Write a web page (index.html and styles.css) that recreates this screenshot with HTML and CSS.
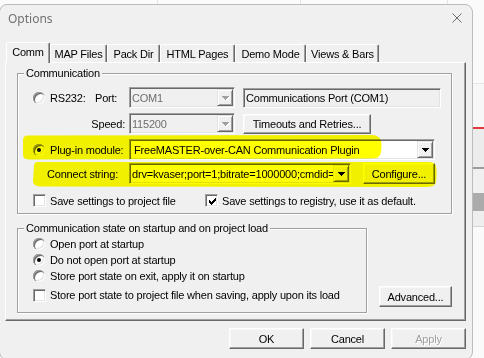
FILE: index.html
```html
<!DOCTYPE html>
<html>
<head>
<meta charset="utf-8">
<title>Options</title>
<link rel="stylesheet" href="styles.css">
</head>
<body>
<div class="desktop">
  <div class="dialog">
    <div class="titlebar">
      <span class="title">Options</span>
      <svg class="close" width="10" height="10" viewBox="0 0 10 10"><path d="M0.5 0.5L9.5 9.5M9.5 0.5L0.5 9.5" stroke="#6b6b6b" stroke-width="1" fill="none"/></svg>
    </div>
    <div class="client">
      <div class="tabs">
        <div class="tab active t-comm">Comm</div>
        <div class="tab t-map">MAP Files</div>
        <div class="tab t-pack">Pack Dir</div>
        <div class="tab t-html">HTML Pages</div>
        <div class="tab t-demo">Demo Mode</div>
        <div class="tab t-views">Views &amp; Bars</div>
      </div>
      <div class="panel">
        <fieldset class="group g1">
          <legend>Communication</legend>
          <div class="gbody">
            <div class="row">
              <div class="lead">
                <span class="radio"></span><span class="rs-label">RS232:</span><span>Port:</span>
              </div>
              <div class="combo sunken disabled w-port">
                <span class="val">COM1</span>
                <span class="drop"><svg width="7" height="4" viewBox="0 0 7 4" shape-rendering="crispEdges"><path d="M0 0h7v1h-1v1h-1v1h-1v1h-1v-1h-1v-1h-1v-1h-1z"/></svg></span>
              </div>
              <div class="field sunken w-desc">Communications Port (COM1)</div>
            </div>
            <div class="row r2">
              <div class="lead right">Speed:</div>
              <div class="combo sunken disabled w-port">
                <span class="val">115200</span>
                <span class="drop"><svg width="7" height="4" viewBox="0 0 7 4" shape-rendering="crispEdges"><path d="M0 0h7v1h-1v1h-1v1h-1v1h-1v-1h-1v-1h-1v-1h-1z"/></svg></span>
              </div>
              <div class="btn w-timeouts">Timeouts and Retries...</div>
            </div>
            <div class="row r3">
              <div class="lead">
                <span class="radio checked"></span><span class="opt-text">Plug-in module:</span>
              </div>
              <div class="combo sunken w-plugin">
                <span class="val list">FreeMASTER-over-CAN Communication Plugin</span>
                <span class="drop"><svg width="7" height="4" viewBox="0 0 7 4" shape-rendering="crispEdges"><path d="M0 0h7v1h-1v1h-1v1h-1v1h-1v-1h-1v-1h-1v-1h-1z"/></svg></span>
              </div>
            </div>
            <div class="row r4">
              <div class="lead indent">Connect string:</div>
              <div class="combo sunken w-connect">
                <span class="val">drv=kvaser;port=1;bitrate=1000000;cmdid=</span>
                <span class="drop"><svg width="7" height="4" viewBox="0 0 7 4" shape-rendering="crispEdges"><path d="M0 0h7v1h-1v1h-1v1h-1v1h-1v-1h-1v-1h-1v-1h-1z"/></svg></span>
              </div>
              <div class="btn w-configure">Configure...</div>
            </div>
            <div class="row r5">
              <div class="check-item w-save1"><span class="checkbox"></span><span class="check-text">Save settings to project file</span></div>
              <div class="check-item"><span class="checkbox"><svg width="7" height="7" viewBox="0 0 7 7" shape-rendering="crispEdges"><path d="M6 0h1v3h-1v1h-1v1h-1v1h-1v1h-1v-1h-1v-1h-1v-3h1v1h1v1h1v-1h1v-1h1z"/></svg></span><span class="check-text">Save settings to registry, use it as default.</span></div>
            </div>
          </div>
        </fieldset>
        <div class="lower">
          <fieldset class="group g2">
            <legend>Communication state on startup and on project load</legend>
            <div class="gbody">
              <div class="line"><span class="radio"></span><span class="opt-text">Open port at startup</span></div>
              <div class="line"><span class="radio checked"></span><span class="opt-text">Do not open port at startup</span></div>
              <div class="line"><span class="radio"></span><span class="opt-text">Store port state on exit, apply it on startup</span></div>
              <div class="line chk-line"><span class="checkbox"></span><span class="check-text">Store port state to project file when saving, apply upon its load</span></div>
            </div>
          </fieldset>
          <div class="btn adv">Advanced...</div>
        </div>
      </div>
      <div class="footer">
        <div class="btn foot">OK</div>
        <div class="btn foot">Cancel</div>
        <div class="btn foot disabled-btn">Apply</div>
      </div>
    </div>
  </div>
  <div class="app-edge"></div>
  <svg class="marker" width="484" height="358" viewBox="0 0 484 358">
    <path d="M23 140Q23 135.5 28 135.5L372 135Q378 135 380.5 139.5Q382.5 146 380.5 154Q379 158.5 372 158.5L30 159.5Q23 159.5 23 155Z"/>
    <path d="M37 162L428 162Q435 162 436 166Q437.5 176 435.5 183.5Q433.5 187 426 187L40 186.5Q33 186 33 181L34 166Q34.5 162 37 162Z"/>
  </svg>
</div>
</body>
</html>
```

FILE: styles.css
```css
* { box-sizing: border-box; }
html, body { margin: 0; padding: 0; }
body {
  width: 484px;
  height: 358px;
  overflow: hidden;
  font: 11px "Liberation Sans", Arial, sans-serif;
  letter-spacing: -0.2px;
  color: #000;
}
.desktop {
  position: relative;
  display: flex;
  width: 484px;
  height: 358px;
  background-color: #fbfbfb;
  background-image:
    linear-gradient(#e3e3e3, #e3e3e3),
    linear-gradient(#e3e3e3, #e3e3e3),
    linear-gradient(#e3e3e3, #e3e3e3);
  background-size: 1px 5px;
  background-repeat: no-repeat;
  background-position: 157px 0, 300px 0, 447px 0;
}
.dialog {
  position: relative;
  z-index: 1;
  flex: none;
  width: 474px;
  height: 356px;
  margin: 4px 0 0 -1px;
  background: #f0f0f0;
  border: 1px solid #bcbcbc;
  border-radius: 8px;
  display: flex;
  flex-direction: column;
  overflow: hidden;
}
.titlebar {
  height: 26px;
  display: flex;
  align-items: center;
  justify-content: space-between;
  padding: 0 10px 0 8px;
}
.title {
  font: 12px "Segoe UI", "Noto Sans", sans-serif;
  letter-spacing: 0;
  color: #727272;
}
.close { display: block; }
.client { padding: 11px 0 0 5px; }

/* tabs */
.tabs {
  display: flex;
  align-items: flex-end;
  height: 20px;
  padding-left: 1px;
}
.tab {
  height: 18px;
  display: flex;
  align-items: center;
  justify-content: center;
  white-space: nowrap;
  border: 1px solid;
  border-bottom: 0;
  border-color: #fff #696969 transparent #fff;
  border-radius: 2px 2px 0 0;
  box-shadow: inset -1px 0 0 #a0a0a0;
  background: #f0f0f0;
}
.tab.active {
  position: relative;
  z-index: 1;
  height: 21px;
  margin-bottom: -1px;
  padding-bottom: 3px;
}
.t-comm { width: 44px; }
.t-map { width: 57px; }
.t-pack { width: 53px; }
.t-html { width: 75px; }
.t-demo { width: 71px; }
.t-views { width: 73px; }

.panel {
  width: 461px;
  height: 259px;
  border: 1px solid;
  border-color: #fff #696969 #696969 #fff;
  box-shadow: inset -1px -1px 0 #a0a0a0;
  padding: 4px 0 0 11px;
}

/* group boxes */
.group {
  margin: 0;
  padding: 0;
  min-width: 0;
  border: 1px solid #a0a0a0;
  box-shadow: inset 1px 1px 0 #fff, 1px 1px 0 #fff;
}
.group legend {
  margin-left: 6px;
  padding: 0 2px;
  line-height: 13px;
  background: #f0f0f0;
  white-space: nowrap;
}
.g1 { width: 435px; }
.g1 .gbody { padding: 7px 0 6px 15px; }
.g2 { width: 350px; }
.g2 .gbody { padding: 1px 0 9px 15px; }

.row {
  display: flex;
  align-items: center;
  height: 21px;
  white-space: nowrap;
}
.r2 { margin-top: 5px; }
.r3 { margin-top: 5px; }
.r4 { margin-top: 3px; }
.r5 { margin-top: 10px; height: 13px; }

.lead {
  flex: none;
  width: 96px;
  display: flex;
  align-items: center;
}
.lead.right { justify-content: flex-end; padding-right: 4px; }
.lead.indent { padding-left: 14px; }
.rs-label { margin-left: 5px; width: 45px; }
.opt-text { margin-left: 5px; }

/* radio & checkbox */
.radio {
  position: relative;
  flex: none;
  width: 12px;
  height: 12px;
  border-radius: 50%;
  background: #fff;
  box-shadow:
    inset 1px 1px 0 #a0a0a0,
    inset 2px 2px 0 #696969,
    inset -1px -1px 0 #fff,
    inset -2px -2px 0 #e3e3e3;
}
.radio.checked::after {
  content: "";
  position: absolute;
  left: 4px;
  top: 4px;
  width: 4px;
  height: 4px;
  border-radius: 50%;
  background: #000;
}
.checkbox {
  flex: none;
  width: 13px;
  height: 13px;
  display: flex;
  align-items: center;
  justify-content: center;
  background: #fff;
  border: 1px solid;
  border-color: #a0a0a0 #fff #fff #a0a0a0;
  box-shadow: inset 1px 1px 0 #696969, inset -1px -1px 0 #e3e3e3;
}
.checkbox svg { display: block; margin: 1px 0 0 1px; }
.check-item { display: flex; align-items: center; }
.check-text { margin-left: 4px; }
.w-save1 { width: 172px; }

/* sunken controls */
.sunken {
  border: 1px solid;
  border-color: #a0a0a0 #fff #fff #a0a0a0;
  box-shadow: inset 1px 1px 0 #696969, inset -1px -1px 0 #e3e3e3;
}
.combo {
  flex: none;
  height: 21px;
  padding: 1px;
  display: flex;
  background: #fff;
}
.combo .val {
  flex: 1;
  display: flex;
  align-items: center;
  padding-left: 1px;
  overflow: hidden;
}
.combo .val.list { padding-left: 3px; }
.drop {
  flex: none;
  width: 16px;
  display: flex;
  align-items: center;
  justify-content: center;
  background: #f0f0f0;
  border: 1px solid;
  border-color: #e3e3e3 #696969 #696969 #e3e3e3;
  box-shadow: inset 1px 1px 0 #fff, inset -1px -1px 0 #a0a0a0;
}
.drop svg { display: block; fill: #000; }
.combo.disabled { background: #f0f0f0; }
.combo.disabled .val { color: #6d6d6d; }
.combo.disabled .drop svg { fill: #a0a0a0; filter: drop-shadow(1px 1px 0 #fff); }
.w-port { width: 106px; }
.w-plugin { width: 306px; }
.w-connect { width: 222px; }

.field {
  flex: none;
  height: 20px;
  margin-left: 8px;
  display: flex;
  align-items: center;
  padding-left: 2px;
  background: #f0f0f0;
}
.w-desc { width: 198px; }

/* buttons */
.btn {
  flex: none;
  height: 21px;
  display: flex;
  align-items: center;
  justify-content: center;
  white-space: nowrap;
  background: #f0f0f0;
  border: 1px solid;
  border-color: #fff #696969 #696969 #fff;
  box-shadow: inset -1px -1px 0 #a0a0a0, inset 1px 1px 0 #f7f7f7;
}
.w-timeouts { width: 128px; height: 20px; margin-left: 8px; }
.w-configure { width: 72px; margin-left: 12px; }

.lower {
  display: flex;
  align-items: flex-end;
  margin-top: 8px;
}
.line {
  display: flex;
  align-items: center;
  height: 16px;
  white-space: nowrap;
}
.chk-line { margin-top: 3px; }
.adv { width: 73px; margin: 0 0 6px 12px; }

.footer {
  display: flex;
  justify-content: flex-end;
  gap: 6px;
  width: 461px;
  margin-top: 7px;
}
.foot { width: 75px; }
.disabled-btn { color: #a0a0a0; text-shadow: 1px 1px 0 #fff; }

/* backdrop app edge */
.app-edge {
  flex: 1;
  height: 358px;
  background: linear-gradient(to bottom,
    #fafafa 0 83px, #e6e6e6 83px 84px, #f7f7f7 84px 127px,
    #e0393e 127px 129px, #ececec 129px 167px, #9c9c9c 167px 169px,
    #f0f0f0 169px 193px, #ababab 193px 211px, #eeeeee 211px 226px,
    #d6d6d6 226px 227px, #fafafa 227px 358px);
}

/* highlighter marks */
.marker {
  position: absolute;
  left: 0;
  top: 0;
  z-index: 2;
  pointer-events: none;
  mix-blend-mode: multiply;
  fill: #ffff00;
}
```
